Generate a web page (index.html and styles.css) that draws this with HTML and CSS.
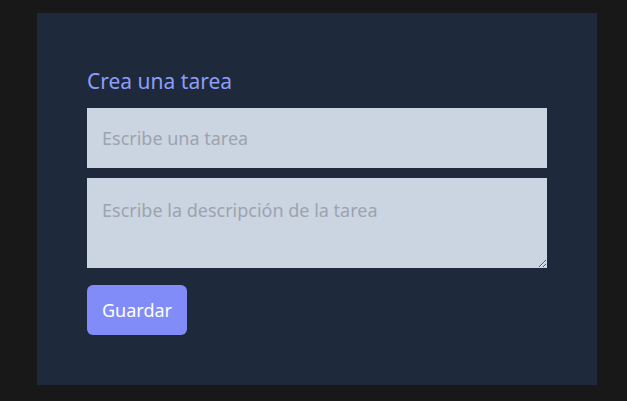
FILE: index.html
```html
<!DOCTYPE html>
<html lang="es">
<head>
<meta charset="utf-8">
<link rel="stylesheet" href="styles.css">
</head>
<body>
<main class="card">
  <h2 class="title">Crea una tarea</h2>
  <form class="form">
    <input class="field" type="text" placeholder="Escribe una tarea">
    <textarea class="field area" placeholder="Escribe la descripción de la tarea"></textarea>
    <button class="btn" type="button">Guardar</button>
  </form>
</main>
</body>
</html>
```
FILE: styles.css
```css
html, body {
  margin: 0;
  padding: 0;
  background: #181818;
}
body {
  padding: 13px 30px 0 37px;
  font-family: "Noto Sans", "Open Sans", sans-serif;
}
.card {
  width: 560px;
  height: 372px;
  box-sizing: border-box;
  background: #1e293b;
  padding: 51px 50px 50px 50px;
}
.title {
  margin: 0 0 9px 0;
  font-size: 21px;
  line-height: 35px;
  font-weight: 400;
  color: #8c9ef9;
}
.form {
  display: flex;
  flex-direction: column;
  align-items: flex-start;
}
.field {
  width: 460px;
  height: 60px;
  box-sizing: border-box;
  border: none;
  outline: none;
  background: #cbd5e1;
  padding: 0 15px;
  font-family: inherit;
  font-size: 18px;
  color: #1f2937;
  margin: 0 0 10px 0;
  display: block;
}
.field::placeholder {
  color: #9ca3af;
}
.area {
  height: 90px;
  padding: 20px 15px 18px;
  resize: vertical;
  margin-bottom: 17px;
}
.btn {
  width: 100px;
  height: 50px;
  border: none;
  border-radius: 6px;
  background: #818cf8;
  color: #ffffff;
  font-family: inherit;
  font-size: 18px;
  padding: 0;
}
```
